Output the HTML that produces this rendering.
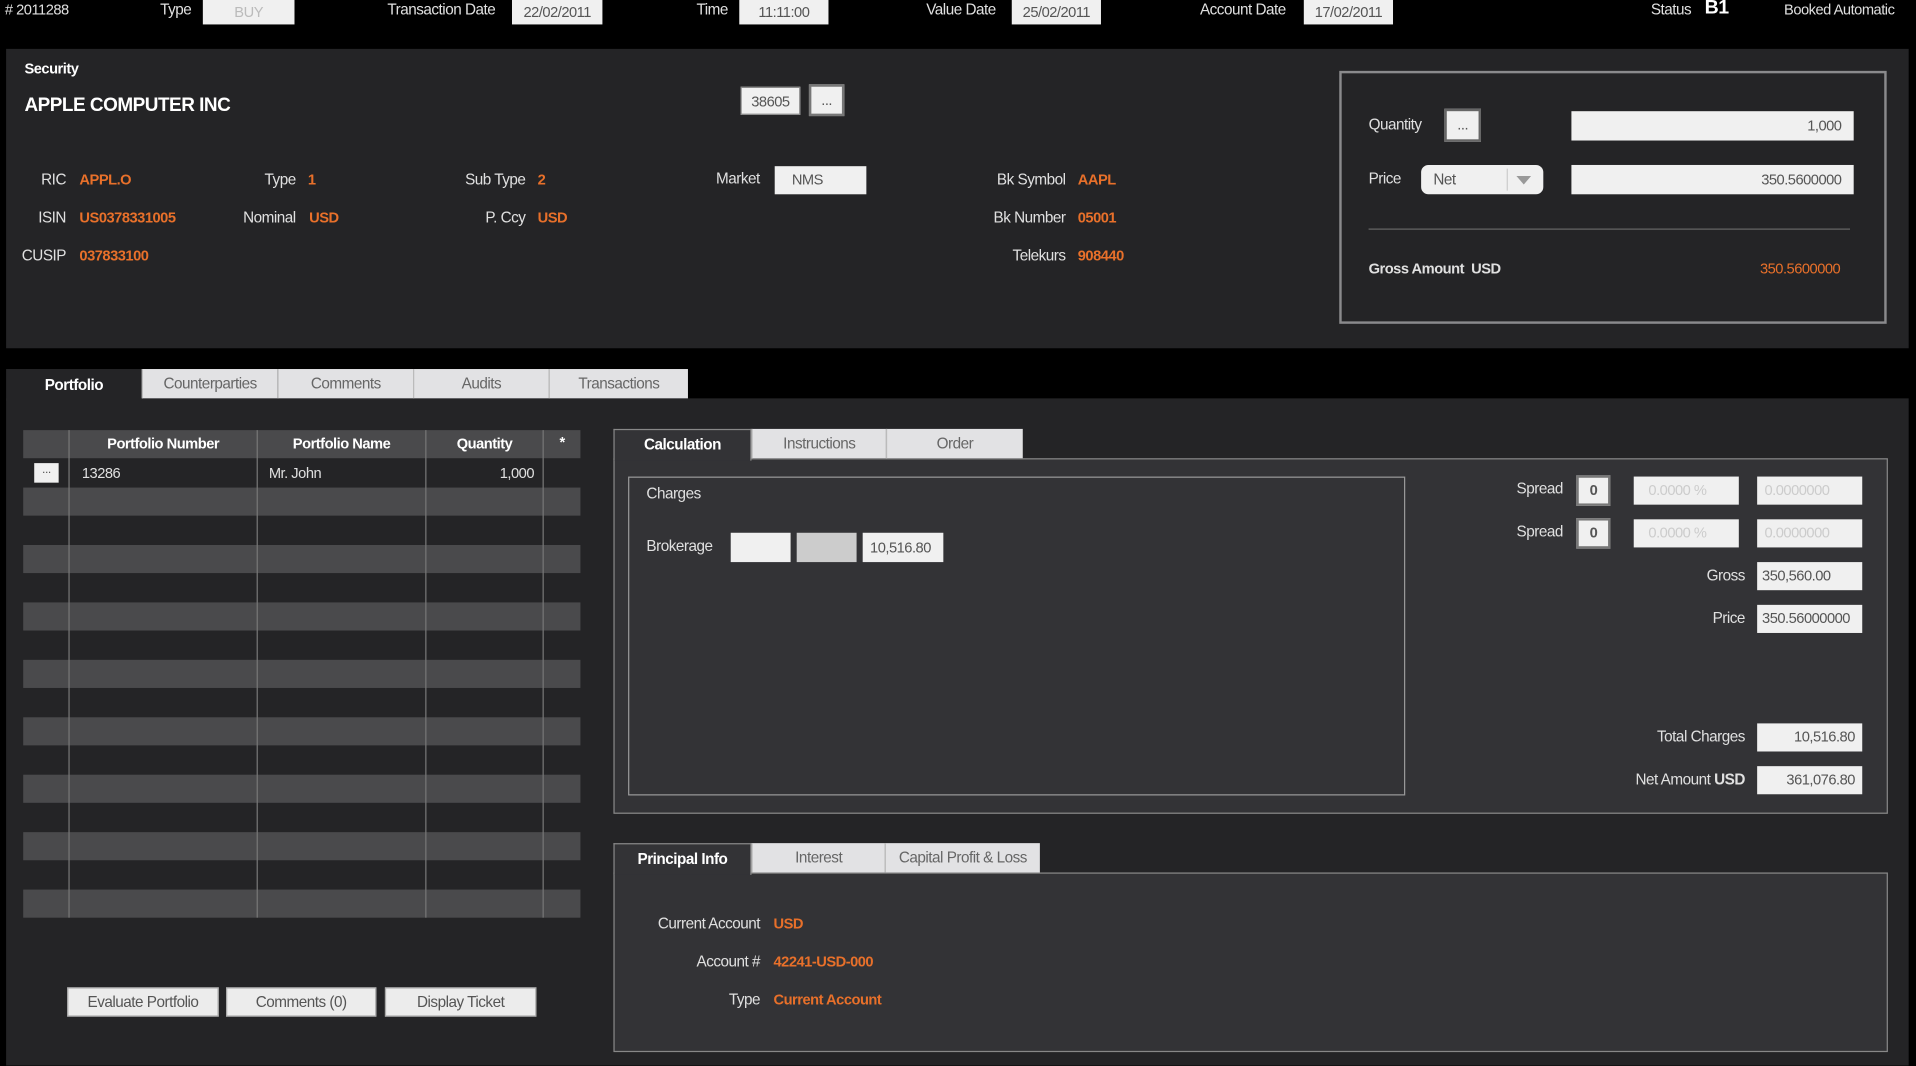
<!DOCTYPE html>
<html><head><meta charset="utf-8"><style>
html,body{margin:0;padding:0;background:#000;width:1916px;height:1065px;overflow:hidden}
#w{position:absolute;left:0;top:0;width:1568px;height:872px;transform:scale(1.22194);transform-origin:0 0;font-family:"Liberation Sans Narrow","Liberation Sans",sans-serif;font-size:12px;color:#ddd;letter-spacing:-0.4px}
#w div{position:absolute;box-sizing:border-box}
.l{white-space:nowrap;color:#e0e0e0}
.r{text-align:right}
.o{color:#e8702a;font-weight:bold}
.b{font-weight:bold}
.in{background:#f0f0f0;color:#555;line-height:20px;padding:0 6px;white-space:nowrap}
.tab{background:#e2e2e4;color:#666;text-align:center;line-height:24px;border-left:1px solid #bbb;font-size:12.5px}
.row{background:#4a4a4c;height:23px;left:0;width:456px}
.vl{background:#777;width:1px;top:0;bottom:0}
.btn{background:#ececec;color:#555;text-align:center;line-height:22px;font-size:12.5px;border:1px solid #aaa}
</style></head><body><div id="w">
<!-- top bar -->
<div class="l" style="left:4px;top:1px">#&nbsp;2011288</div>
<div class="l" style="left:131px;top:1px;font-size:12.5px">Type</div>
<div class="in" style="left:166px;top:0;width:75px;height:20px;color:#bbb;text-align:center">BUY</div>
<div class="l" style="left:317px;top:1px;font-size:12.5px">Transaction Date</div>
<div class="in" style="left:419px;top:0;width:74px;height:20px;text-align:center">22/02/2011</div>
<div class="l" style="left:570px;top:1px;font-size:12.5px">Time</div>
<div class="in" style="left:605px;top:0;width:73px;height:20px;text-align:center">11:11:00</div>
<div class="l" style="left:758px;top:1px;font-size:12.5px">Value Date</div>
<div class="in" style="left:828px;top:0;width:73px;height:20px;text-align:center">25/02/2011</div>
<div class="l" style="left:982px;top:1px;font-size:12.5px">Account Date</div>
<div class="in" style="left:1067px;top:0;width:73px;height:20px;text-align:center">17/02/2011</div>
<div class="l" style="left:1351px;top:1px;font-size:12.5px">Status</div>
<div class="l b" style="left:1395px;top:-2px;font-size:16px;color:#fff">B1</div>
<div class="l" style="left:1460px;top:1px;font-size:12px">Booked Automatic</div>

<!-- security panel -->
<div style="left:5px;top:40px;width:1557px;height:245px;background:#242426"></div>
<div class="l b" style="left:20px;top:49px;color:#fff">Security</div>
<div class="l b" style="left:20px;top:78px;font-size:15.5px;color:#fff">APPLE COMPUTER INC</div>
<div class="in" style="left:606px;top:71px;width:49px;height:23px;line-height:23px;text-align:center;border:1px solid #888">38605</div>
<div class="in" style="left:662px;top:69px;width:29px;height:26px;line-height:22px;text-align:center;border:2px solid #777">...</div>
<div class="l r" style="left:10px;top:140px;width:44px;font-size:12.5px">RIC</div><div class="l o" style="left:65px;top:140px">APPL.O</div>
<div class="l r" style="left:10px;top:171px;width:44px;font-size:12.5px">ISIN</div><div class="l o" style="left:65px;top:171px">US0378331005</div>
<div class="l r" style="left:10px;top:202px;width:44px;font-size:12.5px">CUSIP</div><div class="l o" style="left:65px;top:202px">037833100</div>
<div class="l r" style="left:170px;top:140px;width:72px;font-size:12.5px">Type</div><div class="l o" style="left:252px;top:140px">1</div>
<div class="l r" style="left:170px;top:171px;width:72px;font-size:12.5px">Nominal</div><div class="l o" style="left:253px;top:171px">USD</div>
<div class="l r" style="left:360px;top:140px;width:70px;font-size:12.5px">Sub Type</div><div class="l o" style="left:440px;top:140px">2</div>
<div class="l r" style="left:360px;top:171px;width:70px;font-size:12.5px">P. Ccy</div><div class="l o" style="left:440px;top:171px">USD</div>
<div class="l" style="left:586px;top:139px;font-size:12.5px">Market</div>
<div class="in" style="left:634px;top:136px;width:75px;height:23px;line-height:23px;padding-left:14px">NMS</div>
<div class="l r" style="left:780px;top:140px;width:92px;font-size:12.5px">Bk Symbol</div><div class="l o" style="left:882px;top:140px">AAPL</div>
<div class="l r" style="left:780px;top:171px;width:92px;font-size:12.5px">Bk Number</div><div class="l o" style="left:882px;top:171px">05001</div>
<div class="l r" style="left:780px;top:202px;width:92px;font-size:12.5px">Telekurs</div><div class="l o" style="left:882px;top:202px">908440</div>

<div style="left:1096px;top:58px;width:448px;height:207px;border:2px solid #8a8a8c"></div>
<div class="l" style="left:1120px;top:95px;font-size:12.5px">Quantity</div>
<div class="in" style="left:1182px;top:89px;width:30px;height:27px;border:2px solid #666;line-height:22px;text-align:center">...</div>
<div class="in r" style="left:1286px;top:91px;width:231px;height:24px;line-height:24px;padding-right:10px">1,000</div>
<div class="l" style="left:1120px;top:139px;font-size:12.5px">Price</div>
<div class="in" style="left:1163px;top:135px;width:100px;height:24px;line-height:24px;border-radius:6px;padding-left:10px;font-size:12.5px">Net<span style="position:absolute;left:70px;top:3px;width:1px;height:18px;background:#ccc"></span><span style="position:absolute;left:78px;top:9px;border-left:6px solid transparent;border-right:6px solid transparent;border-top:7px solid #999"></span></div>
<div class="in r" style="left:1286px;top:135px;width:231px;height:24px;line-height:24px;padding-right:10px">350.5600000</div>
<div style="left:1120px;top:187px;width:394px;height:1px;background:#666"></div>
<div class="l b" style="left:1120px;top:213px">Gross Amount&nbsp;&nbsp;USD</div>
<div class="l o r" style="left:1400px;top:213px;width:106px;font-weight:normal">350.5600000</div>

<!-- bottom panel -->
<div style="left:5px;top:326px;width:1557px;height:546px;background:#242426"></div>
<div style="left:5px;top:302px;width:111px;height:26px;background:#242426;color:#fff;text-align:center;line-height:26px;font-weight:bold;font-size:12.5px">Portfolio</div>
<div class="tab" style="left:116px;top:302px;width:111px">Counterparties</div>
<div class="tab" style="left:227px;top:302px;width:111px">Comments</div>
<div class="tab" style="left:338px;top:302px;width:111px">Audits</div>
<div class="tab" style="left:449px;top:302px;width:114px">Transactions</div>

<!-- grid -->
<div style="left:19px;top:352px;width:456px;height:399px">
<div style="left:0;top:0;width:456px;height:23px;background:#4a4a4c"></div>
<div class="row" style="top:47px"></div><div class="row" style="top:94px"></div><div class="row" style="top:141px"></div><div class="row" style="top:188px"></div><div class="row" style="top:235px"></div><div class="row" style="top:282px"></div><div class="row" style="top:329px"></div><div class="row" style="top:376px"></div>
<div class="vl" style="left:37px"></div><div class="vl" style="left:191px"></div><div class="vl" style="left:329px"></div><div class="vl" style="left:425px"></div>
<div class="l b" style="left:38px;width:153px;text-align:center;top:4px;color:#fff">Portfolio Number</div>
<div class="l b" style="left:192px;width:137px;text-align:center;top:4px;color:#fff">Portfolio Name</div>
<div class="l b" style="left:330px;width:95px;text-align:center;top:4px;color:#fff">Quantity</div>
<div class="l b" style="left:426px;width:30px;text-align:center;top:3px;color:#fff">*</div>
<div class="in" style="left:9px;top:27px;width:20px;height:16px;line-height:12px;padding:0;text-align:center;font-size:10px">...</div>
<div class="l" style="left:48px;top:28px">13286</div>
<div class="l" style="left:201px;top:28px">Mr. John</div>
<div class="l r" style="left:330px;top:28px;width:88px">1,000</div>
</div>
<div class="btn" style="left:55px;top:808px;width:124px">Evaluate Portfolio</div>
<div class="btn" style="left:185px;top:808px;width:123px">Comments (0)</div>
<div class="btn" style="left:315px;top:808px;width:124px">Display Ticket</div>

<!-- calculation -->
<div style="left:502px;top:375px;width:1043px;height:291px;background:#333336;border:1px solid #888"></div>
<div style="left:502px;top:351px;width:113px;height:26px;background:#333336;border:1px solid #888;border-bottom:none;color:#fff;font-weight:bold;text-align:center;line-height:24px;font-size:12.5px">Calculation</div>
<div class="tab" style="left:615px;top:351px;width:110px">Instructions</div>
<div class="tab" style="left:725px;top:351px;width:112px">Order</div>
<div style="left:514px;top:390px;width:636px;height:261px;border:1px solid #999"></div>
<div class="l" style="left:529px;top:397px;font-size:12.5px">Charges</div>
<div class="l" style="left:529px;top:440px;font-size:12.5px">Brokerage</div>
<div class="in" style="left:598px;top:436px;width:49px;height:24px"></div>
<div class="in" style="left:652px;top:436px;width:49px;height:24px;background:#ccc"></div>
<div class="in" style="left:706px;top:436px;width:66px;height:24px;line-height:24px">10,516.80</div>
<div class="l r" style="left:1200px;top:393px;width:79px;font-size:12.5px">Spread</div>
<div class="in" style="left:1290px;top:389px;width:28px;height:25px;line-height:21px;border:2px solid #777;text-align:center;padding:0;font-weight:bold">0</div>
<div class="in" style="left:1337px;top:390px;width:86px;height:23px;line-height:23px;color:#ccc;padding-left:12px">0.0000 %</div>
<div class="in" style="left:1438px;top:390px;width:86px;height:23px;line-height:23px;color:#ccc">0.0000000</div>
<div class="l r" style="left:1200px;top:428px;width:79px;font-size:12.5px">Spread</div>
<div class="in" style="left:1290px;top:424px;width:28px;height:25px;line-height:21px;border:2px solid #777;text-align:center;padding:0;font-weight:bold">0</div>
<div class="in" style="left:1337px;top:425px;width:86px;height:23px;line-height:23px;color:#ccc;padding-left:12px">0.0000 %</div>
<div class="in" style="left:1438px;top:425px;width:86px;height:23px;line-height:23px;color:#ccc">0.0000000</div>
<div class="l r" style="left:1330px;top:464px;width:98px;font-size:12.5px">Gross</div>
<div class="in" style="left:1438px;top:460px;width:86px;height:23px;line-height:23px;padding-left:4px">350,560.00</div>
<div class="l r" style="left:1330px;top:499px;width:98px;font-size:12.5px">Price</div>
<div class="in" style="left:1438px;top:495px;width:86px;height:23px;line-height:23px;padding-left:4px">350.56000000</div>
<div class="l r" style="left:1300px;top:596px;width:128px;font-size:12.5px">Total Charges</div>
<div class="in r" style="left:1438px;top:592px;width:86px;height:23px;line-height:23px">10,516.80</div>
<div class="l r" style="left:1300px;top:631px;width:128px;font-size:12.5px">Net Amount <b>USD</b></div>
<div class="in r" style="left:1438px;top:627px;width:86px;height:23px;line-height:23px">361,076.80</div>

<!-- principal -->
<div style="left:502px;top:714px;width:1043px;height:147px;background:#333336;border:1px solid #888"></div>
<div style="left:502px;top:690px;width:113px;height:26px;background:#333336;border:1px solid #888;border-bottom:none;color:#fff;font-weight:bold;text-align:center;line-height:24px;font-size:12.5px">Principal Info</div>
<div class="tab" style="left:615px;top:690px;width:109px">Interest</div>
<div class="tab" style="left:724px;top:690px;width:127px">Capital Profit &amp; Loss</div>
<div class="l r" style="left:510px;top:749px;width:112px;font-size:12.5px">Current Account</div><div class="l o" style="left:633px;top:749px">USD</div>
<div class="l r" style="left:510px;top:780px;width:112px;font-size:12.5px">Account #</div><div class="l o" style="left:633px;top:780px">42241-USD-000</div>
<div class="l r" style="left:510px;top:811px;width:112px;font-size:12.5px">Type</div><div class="l o" style="left:633px;top:811px">Current Account</div>
</div></body></html>
